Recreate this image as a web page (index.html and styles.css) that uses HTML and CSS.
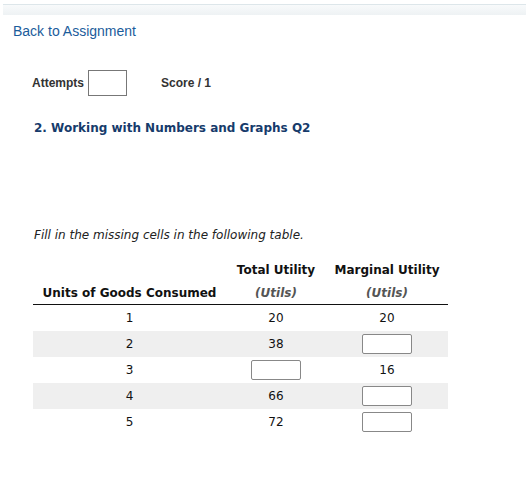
FILE: index.html
```html
<!DOCTYPE html>
<html>
<head>
<meta charset="utf-8">
<link rel="stylesheet" href="styles.css">
</head>
<body>
<div class="topbar"></div>
<div class="backlink"><a href="#">Back to Assignment</a></div>
<div class="meta">
  <span class="label">Attempts</span>
  <span class="attempt-box"></span>
  <span class="label score">Score / 1</span>
</div>
<h2 class="qtitle">2. Working with Numbers and Graphs Q2</h2>
<p class="prompt">Fill in the missing cells in the following table.</p>
<table class="utable">
  <thead>
    <tr class="h1">
      <th></th>
      <th>Total Utility</th>
      <th>Marginal Utility</th>
    </tr>
    <tr class="h2">
      <th>Units of Goods Consumed</th>
      <th class="unit">(Utils)</th>
      <th class="unit">(Utils)</th>
    </tr>
  </thead>
  <tbody>
    <tr><td>1</td><td>20</td><td>20</td></tr>
    <tr class="alt"><td>2</td><td>38</td><td><span class="inp"></span></td></tr>
    <tr><td>3</td><td><span class="inp"></span></td><td>16</td></tr>
    <tr class="alt"><td>4</td><td>66</td><td><span class="inp"></span></td></tr>
    <tr><td>5</td><td>72</td><td><span class="inp"></span></td></tr>
  </tbody>
</table>
</body>
</html>
```
FILE: styles.css
```css
html, body { margin: 0; padding: 0; background: #fff; }
body { font-family: "DejaVu Sans", Verdana, sans-serif; color: #000; }

.topbar {
  margin: 4px 0 0 3px;
  height: 10px;
  border-top: 1px solid #dde6ea;
  background: linear-gradient(#f8fafb, #eef2f4);
}

.backlink {
  padding: 7px 0 0 13px;
  font-family: "Liberation Sans", Arial, sans-serif;
  font-size: 14px;
  line-height: 18px;
}
.backlink a { color: #1b5c9b; text-decoration: none; }

.meta {
  display: flex;
  align-items: center;
  margin: 30px 0 0 32px;
  font-family: "Liberation Sans", Arial, sans-serif;
  font-size: 12px;
  font-weight: bold;
  color: #333;
}
.attempt-box {
  display: inline-block;
  width: 37px;
  height: 24px;
  border: 1px solid #777;
  margin-left: 4px;
}
.score { margin-left: 34px; }

.qtitle {
  margin: 24px 0 0 34px;
  font-size: 12px;
  line-height: 16px;
  font-weight: bold;
  color: #163b6b;
}

.prompt {
  margin: 91px 0 0 34px;
  font-size: 12px;
  line-height: 16px;
  font-style: italic;
  color: #222;
}

.utable {
  margin: 16px 0 0 33px;
  border-collapse: collapse;
  font-size: 12px;
}
.utable th { font-weight: bold; text-align: center; padding: 0; color: #111; vertical-align: middle; }
.utable .h1 th { height: 22px; }
.utable .h2 th { height: 23px; border-bottom: 1px solid #111; }
.utable th:nth-child(1), .utable td:nth-child(1) { width: 193px; }
.utable th:nth-child(2), .utable td:nth-child(2) { width: 100px; }
.utable th:nth-child(3), .utable td:nth-child(3) { width: 122px; }
.utable .unit { font-style: italic; color: #555; }
.utable td { height: 26px; padding: 0; text-align: center; vertical-align: middle; color: #111; }
.utable tr.alt td { background: #efefef; }
.inp {
  display: inline-block;
  width: 48px;
  height: 18px;
  border: 1px solid #888;
  border-radius: 2px;
  background: #fff;
  vertical-align: middle;
}
```
